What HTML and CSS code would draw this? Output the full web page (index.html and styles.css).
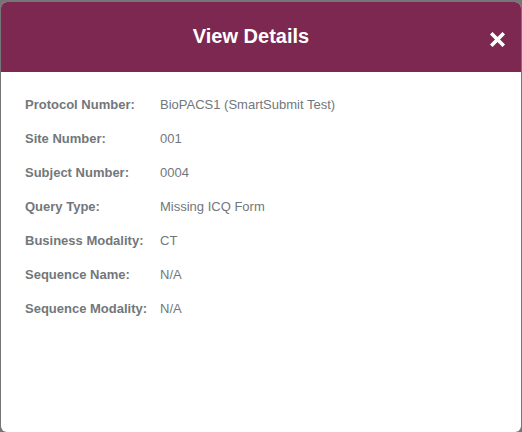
FILE: index.html
```html
<!DOCTYPE html>
<html lang="en">
<head>
<meta charset="utf-8">
<title>View Details</title>
<link rel="stylesheet" href="styles.css">
</head>
<body>
<div class="modal">
  <div class="modal-header">
    <span></span>
    <h1 class="modal-title">View Details</h1>
    <button class="close" aria-label="Close">
      <svg width="15" height="15" viewBox="0 0 15 15"><path d="M2.5 2.5 L12.5 12.5 M12.5 2.5 L2.5 12.5" stroke="#fff" stroke-width="3.6" stroke-linecap="square" fill="none"/></svg>
    </button>
  </div>
  <div class="modal-body">
    <div class="row"><span class="label">Protocol Number:</span><span class="value">BioPACS1 (SmartSubmit Test)</span></div>
    <div class="row"><span class="label">Site Number:</span><span class="value">001</span></div>
    <div class="row"><span class="label">Subject Number:</span><span class="value">0004</span></div>
    <div class="row"><span class="label">Query Type:</span><span class="value">Missing ICQ Form</span></div>
    <div class="row"><span class="label">Business Modality:</span><span class="value">CT</span></div>
    <div class="row"><span class="label">Sequence Name:</span><span class="value">N/A</span></div>
    <div class="row"><span class="label">Sequence Modality:</span><span class="value">N/A</span></div>
  </div>
</div>
</body>
</html>
```
FILE: styles.css
```css
html, body {
  margin: 0;
  padding: 0;
  height: 100%;
}
body {
  background: #767676;
  font-family: "Liberation Sans", Arial, sans-serif;
  overflow: hidden;
}
.modal {
  margin: 2px 1px 0 1px;
  height: 430px;
  background: #fff;
  border-radius: 6px;
  overflow: hidden;
}
.modal-header {
  height: 70px;
  background: #7d2851;
  display: grid;
  grid-template-columns: 1fr auto 1fr;
  align-items: center;
}
.modal-title {
  margin: 0 20px 0 0;
  color: #fff;
  font-size: 20px;
  font-weight: bold;
  line-height: 24px;
  position: relative;
  top: -1px;
}
.close {
  justify-self: end;
  margin-right: 16px;
  background: none;
  border: 0;
  padding: 0;
  width: 15px;
  height: 15px;
  display: flex;
  position: relative;
  top: 2px;
}
.modal-body {
  padding: 15px 24px 0 24px;
}
.row {
  display: flex;
  height: 34px;
  align-items: center;
  font-size: 13px;
  color: #72777b;
}
.label {
  width: 135px;
  font-weight: bold;
}
```
